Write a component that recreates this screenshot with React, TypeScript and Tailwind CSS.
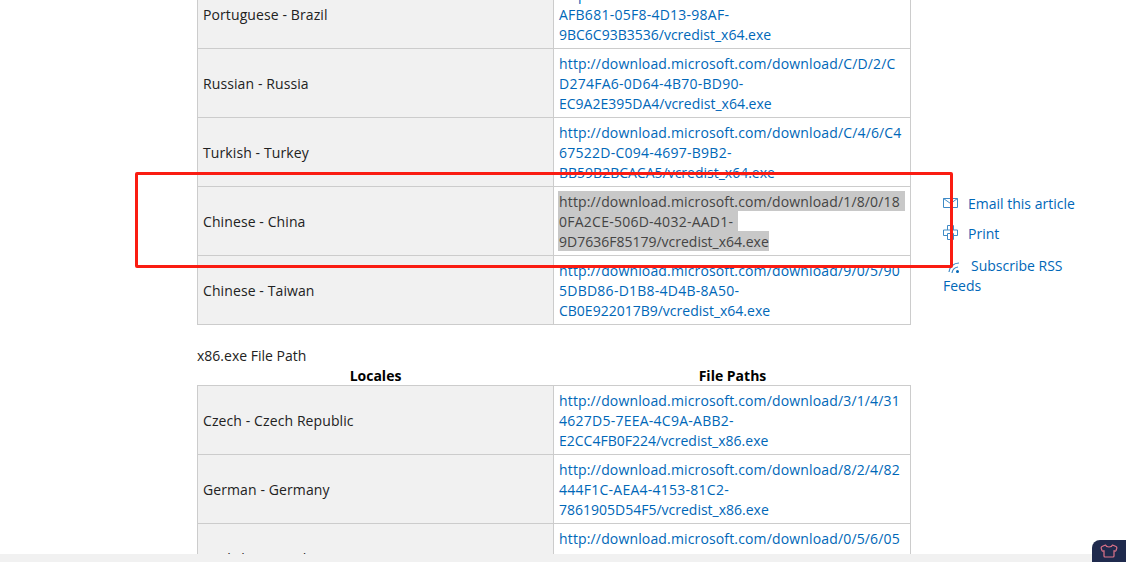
const font = "font-['Open_Sans','Noto_Sans',sans-serif]";

type Row = { locale: string; lines: string[]; selected?: boolean };

const x64Rows: Row[] = [
  {
    locale: "Portuguese - Brazil",
    lines: [
      "http://download.microsoft.com/download/7/C/0/7",
      "AFB681-05F8-4D13-98AF-",
      "9BC6C93B3536/vcredist_x64.exe",
    ],
  },
  {
    locale: "Russian - Russia",
    lines: [
      "http://download.microsoft.com/download/C/D/2/C",
      "D274FA6-0D64-4B70-BD90-",
      "EC9A2E395DA4/vcredist_x64.exe",
    ],
  },
  {
    locale: "Turkish - Turkey",
    lines: [
      "http://download.microsoft.com/download/C/4/6/C4",
      "67522D-C094-4697-B9B2-",
      "BB59B2BCACA5/vcredist_x64.exe",
    ],
  },
  {
    locale: "Chinese - China",
    selected: true,
    lines: [
      "http://download.microsoft.com/download/1/8/0/18",
      "0FA2CE-506D-4032-AAD1-",
      "9D7636F85179/vcredist_x64.exe",
    ],
  },
  {
    locale: "Chinese - Taiwan",
    lines: [
      "http://download.microsoft.com/download/9/0/5/90",
      "5DBD86-D1B8-4D4B-8A50-",
      "CB0E922017B9/vcredist_x64.exe",
    ],
  },
];

const x86Rows: Row[] = [
  {
    locale: "Czech - Czech Republic",
    lines: [
      "http://download.microsoft.com/download/3/1/4/31",
      "4627D5-7EEA-4C9A-ABB2-",
      "E2CC4FB0F224/vcredist_x86.exe",
    ],
  },
  {
    locale: "German - Germany",
    lines: [
      "http://download.microsoft.com/download/8/2/4/82",
      "444F1C-AEA4-4153-81C2-",
      "7861905D54F5/vcredist_x86.exe",
    ],
  },
  {
    locale: "English - United States",
    lines: [
      "http://download.microsoft.com/download/0/5/6/05",
      "6E5B16-D687-4597-8084-",
      "",
    ],
  },
];

// Open Sans runs a little narrow on caps and digits compared to the original font
const lineTracking = ["tracking-[0.15px]", "tracking-[0.25px]", ""];
const selectionPad = ["pr-[5px]", "pr-[5px]", ""];

function FileTable({ rows }: { rows: Row[] }) {
  return (
    <div className="border-t border-l border-[#cccccc] w-[714px]">
      {rows.map((row) => (
        <div key={row.locale} className="flex h-[69px] border-b border-r border-[#cccccc]">
          <div className="w-[356px] shrink-0 bg-[#f1f1f1] border-r border-[#cccccc] pl-[5px] pt-[2px] flex items-center text-[#222222] tracking-[0.1px]">
            {row.locale}
          </div>
          <div className="pt-1 pl-[4px] whitespace-nowrap">
            {row.lines.map((line, i) =>
              row.selected ? (
                <div key={i} className={`h-5 leading-[22px] ${lineTracking[i]}`}>
                  <span className={`inline-block h-5 bg-[#c8c8c8] text-[#444444] pl-[1px] ${selectionPad[i]}`}>{line}</span>
                </div>
              ) : (
                <div key={i} className={`h-5 leading-[22px] pl-[1px] text-[#0067b8] ${lineTracking[i]}`}>
                  {line}
                </div>
              ),
            )}
          </div>
        </div>
      ))}
    </div>
  );
}

function SideLink({ icon, label }: { icon: React.ReactNode; label: string }) {
  return (
    <div className="flex items-center h-5 gap-[10px]">
      {icon}
      <span>{label}</span>
    </div>
  );
}

export default function App() {
  return (
    <div className={`${font} relative h-[562px] w-[1126px] overflow-hidden bg-white text-sm leading-5`}>
      <div className="flex -mt-[21px] pl-[197px]">
        <div className="w-[714px] shrink-0">
          <FileTable rows={x64Rows} />
          <p className="mt-[20px] h-5 leading-[22px] text-[#222222]">x86.exe File Path</p>
          <div className="flex h-5 leading-[22px] font-bold text-black">
            <div className="w-[357px] text-center">Locales</div>
            <div className="w-[357px] text-center">File Paths</div>
          </div>
          <FileTable rows={x86Rows} />
        </div>
        <div className="ml-8 pt-[215px] w-[150px] text-[#0067b8]">
          <SideLink
            label="Email this article"
            icon={
              <svg width="15" height="12" viewBox="0 0 15 12" fill="none" stroke="#3f8ac6" className="mb-[2px]">
                <path d="M.5 1.500h14v9H.5zM.5 1.500l7 5 7-5" />
              </svg>
            }
          />
          <div className="mt-[10px]">
            <SideLink
              label="Print"
              icon={
                <svg width="15" height="15" viewBox="0 0 15 15" fill="none" stroke="#3f8ac6" className="mb-1">
                  <path d="M4.500 5V.5h6V5M4.500 10.500h-4V5h14v5.500h-4M4.500 8.500h6v6h-6z" />
                </svg>
              }
            />
          </div>
          <div className="mt-3">
            <span className="inline-block align-[-3px] mr-[11px] ml-[5px] w-3 h-3">
              <svg width="12" height="12" viewBox="0 0 12 12" fill="none" stroke="#3f8ac6" strokeWidth="1.200">
                <path d="M1 10a10 10 0 0 1 10-9M4 11a7 7 0 0 1 6-6" />
                <circle cx="9.500" cy="9.500" r="1.500" fill="#0067b8" stroke="none" />
              </svg>
            </span>
            Subscribe RSS Feeds
          </div>
        </div>
      </div>

      {/* bottom scrollbar track of the captured page */}
      <div className="absolute left-0 right-0 bottom-0 h-2 bg-[#f1f1f1]" />

      {/* annotation drawn over the screenshot */}
      <div className="absolute left-[135px] top-[172px] w-[818px] h-[96px] border-[3px] border-[#fa1c12] rounded-[2px]" />

      {/* floating widget */}
      <div className="absolute right-0 bottom-0 w-[34px] h-[22px] bg-[#1f2a4d] rounded-tl-[8px] flex items-center justify-center">
        <svg width="18" height="15" viewBox="0 0 18 15" fill="none" stroke="#e0748a" strokeWidth="1.200" strokeLinejoin="round">
          <path d="M5.500 1 2 2.500c-.8.400-1 1-.8 1.700l.8 2.300c.2.500.6.600 1 .5l1-.3v5.300c0 .6.400 1 1 1h8c.6 0 1-.4 1-1V6.700l1 .3c.4.100.8 0 1-.5l.8-2.300c.2-.7 0-1.300-.8-1.700L12.500 1c-.5 1.500-1.800 2-3.500 2S6 2.500 5.500 1z" />
        </svg>
      </div>
    </div>
  );
}
